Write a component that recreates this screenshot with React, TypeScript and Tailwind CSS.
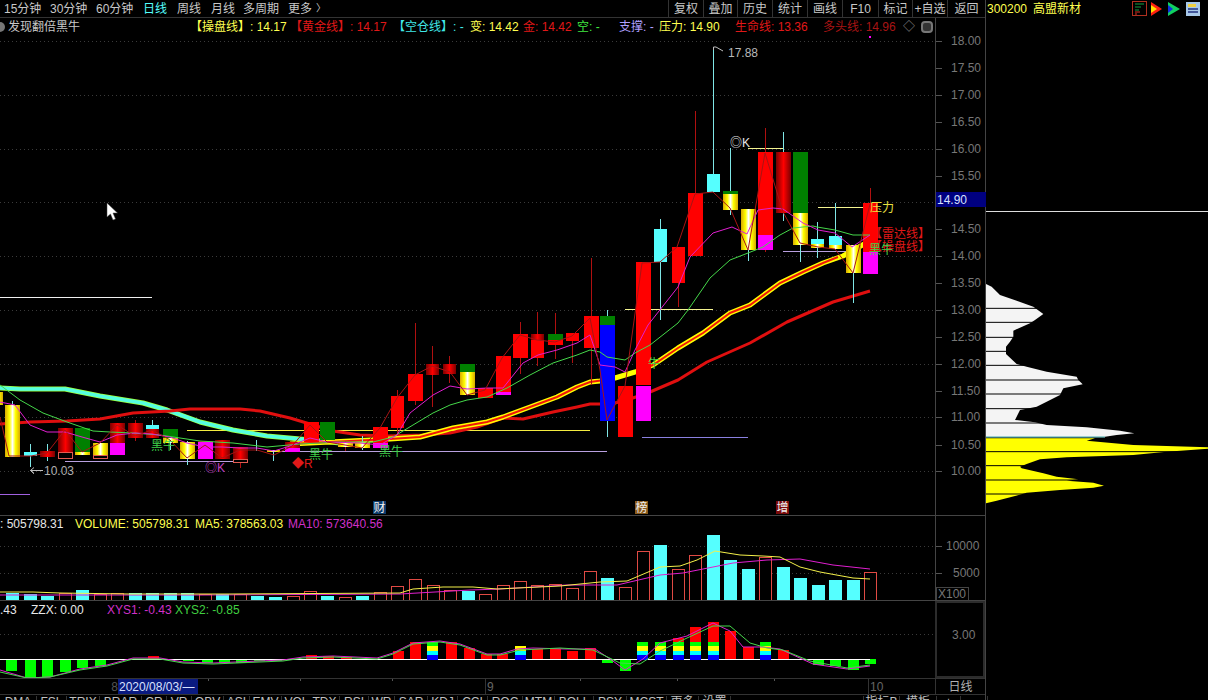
type Layer = [number, number, string];

interface Candle {
  x: number;
  w?: number;
  hi?: number;
  lo?: number;
  wick?: string;
  rects: Layer[];
}

const CYAN_WICK = '#7fe6e6';
const RED_WICK = '#b01010';

const fills: Record<string, string> = {
  r: '#ff0000',
  g: 'url(#redGrad)',
  y: 'url(#goldGrad)',
  c: '#55ffff',
  m: '#ff00ff',
  n: '#008000',
  b: '#0000ff',
};

const candles: Candle[] = [
  { x: -12, rects: [[392, 405, 'y']] },
  { x: 5, hi: 401, lo: 457, wick: CYAN_WICK, rects: [[405, 457, 'y']] },
  { x: 24, w: 13, hi: 444, lo: 467, wick: CYAN_WICK, rects: [[452, 456, 'c']] },
  { x: 40, hi: 444, lo: 461, wick: CYAN_WICK, rects: [[451, 457, 'g']] },
  { x: 58, rects: [[428, 452, 'g'], [452, 459, 'o']] },
  { x: 75, rects: [[428, 452, 'n'], [452, 455, 'y']] },
  { x: 93, rects: [[443, 455, 'y'], [455, 459, 'o']] },
  { x: 110, rects: [[423, 443, 'g'], [443, 455, 'm']] },
  { x: 128, hi: 420, lo: 441, wick: RED_WICK, rects: [[423, 438, 'g']] },
  { x: 146, w: 13, hi: 420, lo: 438, wick: CYAN_WICK, rects: [[425, 429, 'c'], [429, 438, 'g']] },
  { x: 163, hi: 429, lo: 450, wick: CYAN_WICK, rects: [[429, 438, 'n'], [438, 443, 'y']] },
  { x: 180, hi: 441, lo: 465, wick: CYAN_WICK, rects: [[442, 459, 'y']] },
  { x: 198, rects: [[441, 443, 'g'], [442, 459, 'm']] },
  { x: 215, rects: [[440, 459, 'g']] },
  { x: 233, lo: 468, hi: 447, wick: RED_WICK, rects: [[447, 459, 'g'], [459, 463, 'o']] },
  { x: 250, w: 13, hi: 440, lo: 451, wick: CYAN_WICK, rects: [] },
  { x: 267, w: 13, hi: 450, lo: 461, wick: CYAN_WICK, rects: [[450, 452, 'y']] },
  { x: 285, rects: [[442, 448, 'g'], [448, 452, 'm']] },
  { x: 304, rects: [[422, 442, 'r']] },
  { x: 320, rects: [[422, 440, 'n']] },
  { x: 338, hi: 441, lo: 451, wick: RED_WICK, rects: [[443, 447, 'y']] },
  { x: 355, hi: 436, lo: 450, wick: CYAN_WICK, rects: [[442, 448, 'y']] },
  { x: 373, rects: [[427, 443, 'r'], [443, 448, 'm']] },
  { x: 391, w: 13, hi: 390, lo: 435, wick: RED_WICK, rects: [[396, 428, 'r']] },
  { x: 408, hi: 323, lo: 405, wick: RED_WICK, rects: [[374, 401, 'r']] },
  { x: 426, w: 13, hi: 346, lo: 407, wick: RED_WICK, rects: [[364, 375, 'g']] },
  { x: 443, w: 13, hi: 356, lo: 383, wick: RED_WICK, rects: [[364, 374, 'g']] },
  { x: 460, rects: [[364, 372, 'n'], [372, 395, 'y']] },
  { x: 478, rects: [[388, 398, 'r']] },
  { x: 496, rects: [[356, 392, 'r'], [392, 395, 'm']] },
  { x: 513, hi: 322, lo: 374, wick: RED_WICK, rects: [[334, 358, 'r']] },
  { x: 531, w: 13, hi: 312, lo: 366, wick: RED_WICK, rects: [[334, 340, 'g'], [340, 358, 'r']] },
  { x: 548, hi: 313, lo: 359, wick: RED_WICK, rects: [[334, 340, 'n'], [340, 345, 'r']] },
  { x: 566, w: 13, lo: 363, hi: 333, wick: RED_WICK, rects: [[333, 341, 'r']] },
  { x: 584, hi: 258, lo: 385, wick: RED_WICK, rects: [[316, 348, 'r']] },
  { x: 600, hi: 310, lo: 437, wick: CYAN_WICK, rects: [[316, 325, 'n'], [325, 421, 'b']] },
  { x: 618, rects: [[386, 437, 'r']] },
  { x: 636, rects: [[262, 385, 'r'], [386, 421, 'm']] },
  { x: 654, w: 13, hi: 219, lo: 320, wick: CYAN_WICK, rects: [[229, 262, 'c']] },
  { x: 672, w: 13, lo: 307, wick: RED_WICK, hi: 247, rects: [[247, 283, 'r']] },
  { x: 688, hi: 111, lo: 256, wick: RED_WICK, rects: [[193, 256, 'r']] },
  { x: 707, w: 13, hi: 47, lo: 192, wick: CYAN_WICK, rects: [[174, 192, 'c']] },
  { x: 723, hi: 148, lo: 215, wick: CYAN_WICK, rects: [[191, 194, 'n'], [194, 210, 'y']] },
  { x: 741, lo: 261, hi: 209, wick: CYAN_WICK, rects: [[209, 250, 'y']] },
  { x: 758, hi: 128, lo: 252, wick: RED_WICK, rects: [[152, 235, 'r'], [235, 250, 'm']] },
  { x: 776, hi: 132, lo: 221, wick: CYAN_WICK, rects: [[152, 213, 'g']] },
  { x: 793, lo: 262, hi: 152, wick: CYAN_WICK, rects: [[152, 213, 'n'], [213, 245, 'y']] },
  { x: 811, w: 13, hi: 222, lo: 258, wick: CYAN_WICK, rects: [[239, 244, 'c'], [244, 248, 'y']] },
  { x: 829, w: 13, hi: 203, lo: 250, wick: CYAN_WICK, rects: [[236, 245, 'c'], [245, 249, 'y']] },
  { x: 846, hi: 245, lo: 303, wick: CYAN_WICK, rects: [[245, 273, 'y']] },
  { x: 863, hi: 188, lo: 262, wick: RED_WICK, rects: [[203, 252, 'r'], [252, 274, 'm']] },
];

const closeLine =
  '0,417 9,456 31,456 47,453 65,430 82,452 100,443 117,425 135,436 152,430 170,440 187,458 205,445 222,458 240,450 257,450 274,455 292,446 310,425 327,442 345,445 362,448 380,428 397,398 415,375 432,366 450,372 467,395 485,390 502,358 520,335 537,340 555,342 572,336 590,318 600,370 607,420 625,386 642,263 660,262 677,247 695,194 713,192 730,208 748,250 765,153 783,212 800,243 818,247 835,249 853,273 870,204';
const ma5Line =
  '0,402 15,405 30,425 47,432 65,432 82,437 100,442 117,435 135,433 152,434 170,437 187,443 205,447 222,447 240,448 257,448 274,451 290,446 310,438 327,442 360,443 380,445 397,435 410,413 433,395 450,386 467,389 487,388 503,388 523,363 538,355 557,350 577,343 590,335 600,365 615,367 625,372 635,350 648,325 678,287 690,257 713,233 732,227 747,234 758,210 773,208 783,209 803,223 818,230 835,233 852,247 870,235';
const ma10Line =
  '0,385 20,400 43,413 67,422 93,431 110,432 133,433 160,435 180,438 200,441 233,443 267,447 300,444 320,443 340,442 373,442 393,437 413,425 433,413 450,405 467,400 487,397 507,388 530,375 553,363 577,355 590,350 600,352 607,357 625,360 635,353 650,345 678,323 688,310 710,278 730,260 748,253 763,247 777,237 780,235 793,228 793,228 813,226 817,227 835,230 853,235 870,235';
const cyanLine =
  '0,388 20,389 65,389 100,396 143,403 167,410 200,422 233,430 267,436 300,439 320,441 340,443';
const redLine =
  '0,424 30,422 67,421 100,419 133,413 170,411 190,409 240,409 260,411 290,418 310,424 333,431 360,435 387,436 423,435 450,433 477,427 503,418 523,419 553,412 577,407 590,404 600,404 615,403 633,398 650,392 678,380 707,362 750,343 787,322 833,302 870,291';
const goldLine =
  '290,444 330,442 390,439 420,437 453,428 487,422 503,417 530,407 557,397 577,387 590,382 600,381 615,378 635,372 653,365 678,348 703,333 730,313 750,305 780,283 803,272 823,263 843,256 866,243';

const guides: [number, number, number, string][] = [
  [0, 152, 297, '#f0f0f0'],
  [187, 590, 430, '#f4ec40'],
  [65, 237, 461, '#b9a0e0'],
  [275, 607, 451, '#b9a0e0'],
  [0, 30, 494, '#a060e0'],
  [642, 748, 437, '#8a80e0'],
  [625, 713, 309, '#f4f490'],
  [748, 783, 148, '#f4f490'],
  [783, 860, 251, '#b9a0e0'],
  [818, 866, 207, '#f4f490'],
];

const volumes: [number, number, boolean][] = [
  [6, 593, false], [24, 594, false], [41, 596, false], [59, 593, true], [76, 590, false], [94, 594, true],
  [111, 593, true], [129, 593, false], [146, 593, false], [164, 593, false], [181, 593, false], [199, 594, true],
  [216, 594, false], [234, 594, true], [251, 596, false], [269, 597, false], [287, 596, true], [304, 591, true],
  [321, 596, false], [339, 597, true], [356, 596, false], [374, 592, true], [391, 586, true], [409, 579, true],
  [427, 585, true], [444, 590, true], [462, 591, false], [479, 594, true], [497, 585, true], [514, 581, true],
  [531, 585, true], [549, 584, true], [566, 588, true], [584, 571, true], [601, 578, false], [619, 587, true],
  [637, 551, true], [654, 545, false], [672, 569, true], [689, 555, true], [707, 535, false], [724, 560, false],
  [742, 569, false], [759, 557, true], [777, 567, false], [794, 578, false], [812, 585, false], [829, 580, false],
  [847, 580, false], [864, 572, true],
];

const volYellow =
  '0,592 33,592 60,593 130,594 230,594 400,593 413,589 443,587 473,587 497,589 560,586 600,582 627,581 660,567 680,566 697,560 715,551 740,555 763,556 780,557 800,567 820,572 853,578 870,579';
const volMagenta =
  '0,595 200,595 400,594 470,590 500,589 533,587 567,585 617,585 660,575 683,573 713,567 733,563 767,560 800,559 833,565 870,569';

const oscBars: [number, number, string][] = [
  [6, 670, 'lime'], [25, 677, 'lime'], [42, 676, 'lime'], [60, 671, 'lime'], [77, 667, 'lime'], [95, 665, 'lime'],
  [148, 655, 'red'], [183, 660, 'lime'], [202, 662, 'lime'], [219, 662, 'lime'], [236, 662, 'lime'], [254, 660, 'lime'],
  [271, 660, 'lime'], [306, 654, 'red'], [323, 655, 'red'], [341, 656, 'red'], [393, 650, 'red'], [410, 641, 'red'],
  [446, 641, 'red'], [464, 647, 'red'], [481, 653, 'red'], [497, 653, 'red'], [532, 648, 'red'], [550, 648, 'red'],
  [567, 650, 'red'], [585, 647, 'red'], [602, 662, 'lime'], [620, 670, 'lime'], [725, 630, 'red'], [743, 646, 'red'],
  [778, 649, 'red'], [813, 664, 'lime'], [830, 665, 'lime'], [848, 669, 'lime'], [865, 663, 'lime'],
];

// bars stacked blue, cyan, yellow, lime, and then a red cap
const rainbowBars: [number, number, number][] = [
  [427, 641, 641],
  [515, 645, 645],
  [637, 641, 641],
  [655, 641, 641],
  [673, 641, 637],
  [690, 641, 626],
  [708, 641, 621],
  [760, 641, 641],
];

const oscMagenta =
  '0,669 27,677 50,676 80,668 107,664 133,657 160,657 183,661 213,662 283,659 303,656 333,655 377,657 393,652 413,642 440,640 460,643 487,653 500,653 517,648 533,647 567,648 595,648 613,660 625,669 643,658 660,642 687,635 713,622 730,630 743,646 763,646 780,648 813,663 847,668 870,665';
const oscGreen =
  '0,671 27,677 50,676 80,669 107,665 133,658 160,658 183,662 213,663 283,660 303,657 333,656 377,658 393,653 413,643 440,641 460,644 487,654 500,654 520,649 560,647 593,649 620,662 640,663 660,650 687,637 713,625 730,625 750,642 767,647 783,649 810,660 847,667 870,664';

const axisPrices = [
  ['18.00', 41], ['17.50', 68], ['17.00', 95], ['16.50', 122], ['16.00', 149], ['15.50', 176],
  ['14.50', 229], ['14.00', 256], ['13.50', 283], ['13.00', 310], ['12.50', 337], ['12.00', 364],
  ['11.50', 391], ['11.00', 417], ['10.50', 445], ['10.00', 471],
] as [string, number][];

const profileWhite =
  '558,342 575,350 600,375 650,392 700,410 730,432 705,450 690,460 640,482 640,500 630,515 618,530 618,552 650,582 680,590 740,605 830,620 835,630 848,643 790,655 780,675 740,695 710,710 660,720 645,750 705,757 740,765 860,772 960,782 1003,790 950,795 915,800 558,800';
const profileYellow =
  '558,805 885,805 860,812 1000,825 1224,832 1224,836 1100,845 1000,855 800,862 720,868 680,882 660,890 665,895 730,910 770,920 835,928 800,932 880,938 912,947 880,953 780,960 680,968 645,978 590,992 558,1000';
const profileGaps = [415, 457, 502, 544, 586, 630, 672, 716, 759, 845, 887, 930, 972];

const toolLeft = [
  ['15分钟', 'w-[50px] pl-[4px]'],
  ['30分钟', 'w-[46px]'],
  ['60分钟', 'w-[47px]'],
];
const toolRight: [string, string][] = [
  ['复权', 'w-[35px]'],
  ['叠加', 'w-[34px]'],
  ['历史', 'w-[35px]'],
  ['统计', 'w-[35px]'],
  ['画线', 'w-[35px]'],
  ['F10', 'w-[36px]'],
  ['标记', 'w-[34px]'],
  ['+自选', 'w-[35px]'],
  ['返回', 'w-[38px]'],
];

const tabs: [string, string][] = [
  ['DMA', 'w-[37px]'], ['FSL', 'w-[30px]'], ['TRIX', 'w-[33px]'], ['BRAR', 'w-[42px]'], ['CR', 'w-[25px]'],
  ['VR', 'w-[25px]'], ['OBV', 'w-[32px]'], ['ASI', 'w-[26px]'], ['EMV', 'w-[32px]'], ['VOL-TDX', 'w-[58px]'],
  ['RSI', 'w-[29px]'], ['WR', 'w-[26px]'], ['SAR', 'w-[33px]'], ['KDJ', 'w-[30px]'], ['CCI', 'w-[30px]'],
  ['ROC', 'w-[35px]'], ['MTM', 'w-[32px]'], ['BOLL', 'w-[39px]'], ['PSY', 'w-[33px]'], ['MCST', 'w-[40px]'],
  ['更多', 'w-[32px]'], ['设置', 'w-[32px] text-[#7fe6e6]'], ['', 'w-[133px]'], ['指标B', 'w-[36px]'],
  ['模板', 'w-[37px]'], ['+', 'w-[24px]'], ['', 'w-[27px]'],
];

function Poly({ points, color, width = 1 }: { points: string; color: string; width?: number }) {
  return <polyline points={points} fill="none" stroke={color} strokeWidth={width} strokeLinejoin="round" />;
}

function Dotted({ y }: { y: number }) {
  return <line x1={0} x2={935} y1={y + 0.5} y2={y + 0.5} stroke="#3a3a3a" strokeDasharray="1 3" />;
}

function Tick() {
  return <span className="w-px h-[2px] self-start bg-[#555]" />;
}

function CandleMark({ c }: { c: Candle }) {
  const w = c.w ?? 15;
  const cx = c.x + w / 2;
  return (
    <g>
      {c.hi !== undefined && c.lo !== undefined && (
        <line x1={cx} x2={cx} y1={c.hi} y2={c.lo} stroke={c.wick} strokeWidth={1} />
      )}
      {c.rects.map(([top, bottom, kind], i) =>
        kind === 'o' ? (
          <rect key={i} x={c.x + 0.5} y={top + 0.5} width={w - 1} height={bottom - top - 1} fill="#000" stroke="#e05a50" />
        ) : (
          <rect key={i} x={c.x} y={top} width={w} height={bottom - top} fill={fills[kind]} />
        ),
      )}
    </g>
  );
}

function Cow({ x, y }: { x: number; y: number }) {
  return (
    <text x={x} y={y} fontSize={12} fill="#3fd24a">
      黑牛
    </text>
  );
}

function Badge({ x, label, color }: { x: number; label: string; color: string }) {
  return (
    <g>
      <rect x={x} y={501} width={13} height={13} fill={color} />
      <text x={x + 0.5} y={512} fontSize={12} fill="#f0f0f0">
        {label}
      </text>
    </g>
  );
}

function PriceChart() {
  return (
    <svg viewBox="0 35 935 480" className="block w-[935px] h-[480px]">
      <defs>
        <linearGradient id="goldGrad">
          <stop offset="0" stopColor="#d8a800" />
          <stop offset="0.3" stopColor="#ffff00" />
          <stop offset="0.5" stopColor="#ffffff" />
          <stop offset="0.7" stopColor="#ffff00" />
          <stop offset="1" stopColor="#d8a800" />
        </linearGradient>
        <linearGradient id="redGrad">
          <stop offset="0" stopColor="#7a0000" />
          <stop offset="0.5" stopColor="#ff0000" />
          <stop offset="1" stopColor="#7a0000" />
        </linearGradient>
      </defs>

      {[41, 95, 149, 202, 256, 310, 364, 417, 471].map((y) => (
        <Dotted key={y} y={y} />
      ))}
      <rect x={869} y={36} width={2} height={2} fill="#ff00ff" />

      {guides.map(([x1, x2, y, color]) => (
        <line key={`${x1}-${y}`} x1={x1} x2={x2} y1={y + 0.5} y2={y + 0.5} stroke={color} />
      ))}

      <Poly points={cyanLine} color="#9dff3a" width={5} />
      <Poly points={cyanLine} color="#55ffe0" width={3.5} />
      <Poly points={redLine} color="#e00f0f" width={3} />
      <Poly points={goldLine} color="#ffff00" width={5} />
      <polyline points="290,444 330,442 390,439 420,437 453,428 487,422 503,417 530,407 557,397 577,387 590,382 612,379" fill="none" stroke="#f01808" strokeWidth={2} />
      <polyline points="640,370 653,365 678,348 703,333 730,313 750,305 780,283 803,272 823,263 838,257" fill="none" stroke="#f01808" strokeWidth={2} />

      {candles.map((c) => (
        <CandleMark key={c.x} c={c} />
      ))}

      <Poly points={ma10Line} color="#45d84a" />
      <Poly points={ma5Line} color="#e01fd0" />
      <Poly points={closeLine} color="#a81414" />

      <polyline points="34,467.5 30.5,470.5 34,473.5 30.5,470.5 43,470.5" fill="none" stroke="#c0c0c0" />
      <text x={44} y={475} fontSize={12} fill="#b0b0b0">10.03</text>
      <text x={205} y={472} fontSize={12} fill="#c040c0">◎K</text>
      <Cow x={151} y={450} />
      <Cow x={309} y={459} />
      <Cow x={379} y={456} />
      <text x={292} y={468} fontSize={12} fill="#e01818">◆R</text>

      <polyline points="713.5,50 713.5,47 716,47 723,51" fill="none" stroke="#c0c0c0" />
      <text x={728} y={57} fontSize={12} fill="#b8b8b8">17.88</text>
      <text x={730} y={147} fontSize={12} fill="#e8e8e8">◎K</text>
      <text x={648} y={368} fontSize={12} fill="#3fd24a">牛</text>
      <text x={870} y={212} fontSize={12} fill="#e8e040">压力</text>
      <text x={870} y={238} fontSize={12} fill="#e01818">【雷达线】</text>
      <text x={870} y={251} fontSize={12} fill="#e01818">【操盘线】</text>
      <Cow x={869} y={254} />

      <Badge x={373} label="财" color="#0b3a6b" />
      <Badge x={635} label="榜" color="#8a5a1a" />
      <Badge x={776} label="增" color="#7a0a0a" />

      <path d="M107 203 L107 217 L110.5 214 L113 220 L115.5 219 L113 213 L117.5 213 Z" fill="#fff" stroke="#444" strokeWidth={0.5} />
    </svg>
  );
}

function PriceAxis() {
  return (
    <svg viewBox="936 18 50 497" className="block w-[50px] h-[497px]">
      {axisPrices.map(([label, y]) => (
        <g key={label}>
          <line x1={936} x2={942} y1={y + 0.5} y2={y + 0.5} stroke="#555" />
          <text x={951} y={y + 4} fontSize={12} fill="#777">
            {label}
          </text>
        </g>
      ))}
      <rect x={936} y={192} width={50} height={15} fill="#000080" />
      <text x={937} y={204} fontSize={12} fill="#d8e0ff">14.90</text>
    </svg>
  );
}

function VolumeChart() {
  return (
    <svg viewBox="0 532 935 68" className="block w-[935px] h-[68px]">
      <Dotted y={546} />
      <Dotted y={573} />
      {volumes.map(([x, top, up]) =>
        up ? (
          <rect key={x} x={x + 0.5} y={top + 0.5} width={12} height={600 - top} fill="#000" stroke="#e04a44" />
        ) : (
          <rect key={x} x={x} y={top} width={13} height={601 - top} fill="#55ffff" />
        ),
      )}
      <Poly points={volMagenta} color="#e01fd0" />
      <Poly points={volYellow} color="#f4f04a" />
    </svg>
  );
}

function VolumeAxis() {
  return (
    <svg viewBox="936 516 50 85" className="block w-[50px] h-[85px]">
      {[['10000', 546, 946], ['5000', 573, 953]].map(([label, y, x]) => (
        <g key={label}>
          <line x1={936} x2={942} y1={Number(y) + 0.5} y2={Number(y) + 0.5} stroke="#555" />
          <text x={x} y={Number(y) + 4} fontSize={12} fill="#777">
            {label}
          </text>
        </g>
      ))}
      <rect x={936.5} y={587.5} width={32} height={13} fill="none" stroke="#444" />
      <text x={938} y={598} fontSize={12} fill="#777">X100</text>
    </svg>
  );
}

function OscChart() {
  return (
    <svg viewBox="0 617 935 60" className="block w-[935px] h-[60px]">
      <Dotted y={633} />
      {oscBars.map(([x, edge, kind]) => (
        <rect
          key={x}
          x={x}
          y={Math.min(edge, 658)}
          width={11}
          height={Math.abs(edge - 658)}
          fill={kind === 'lime' ? '#00ff00' : '#ff0000'}
        />
      ))}
      <line x1={0} x2={870} y1={658.5} y2={658.5} stroke="#fff" />
      {rainbowBars.map(([x, green, red]) => (
        <g key={x}>
          {red < green && <rect x={x} y={red} width={11} height={green - red} fill="#ff0000" />}
          <rect x={x} y={green} width={11} height={645 - green} fill={green === 645 ? '#ffff90' : '#00ff00'} />
          <rect x={x} y={645} width={11} height={5} fill="#ffff00" />
          <rect x={x} y={650} width={11} height={4} fill="#00ffff" />
          <rect x={x} y={654} width={11} height={5} fill="#0000ff" />
        </g>
      ))}
      <Poly points={oscMagenta} color="#e01fd0" />
      <Poly points={oscGreen} color="#45d84a" />
    </svg>
  );
}

function ProfileChart() {
  return (
    <svg viewBox="558 126 666 882" className="block w-[222px] h-[294px]">
      <polygon points={profileWhite} fill="#f4f4f4" />
      <polygon points={profileYellow} fill="#ffff00" />
      <line x1={558} x2={915} y1={801} y2={801} stroke="#7fe6e6" strokeWidth={3} />
      {profileGaps.map((y) => (
        <line key={y} x1={558} x2={1224} y1={y} y2={y} stroke="#000" strokeWidth={3} />
      ))}
    </svg>
  );
}

function ToolIcons() {
  return (
    <svg viewBox="0 0 83 18" className="block w-[83px] h-[18px]">
      <rect x={6.5} y={1.5} width={14} height={14} fill="#000" stroke="#b03020" />
      <path d="M9 4h9M9 7h6M9 10h4" stroke="#10a040" strokeWidth={1} />
      <path d="M9 12h5M9 14h2" stroke="#e03020" strokeWidth={1} />
      <path d="M25 2 L25 16 L36 9 Z" fill="#ff2010" />
      <path d="M25 5 L25 13 L31 9 Z" fill="#ffe000" />
      <path d="M42 2 L42 16 L54 9 Z" fill="#10d060" />
      <path d="M42 5 L42 13 L47 9 Z" fill="#1030e0" />
      <rect x={60} y={2} width={14} height={14} fill="#a8c8e8" />
      <rect x={62} y={4} width={8} height={3} fill="#f0d040" />
      <path d="M62 9h10M62 12h10" stroke="#203080" strokeWidth={1.5} />
    </svg>
  );
}

function Legend({ label, value, className }: { label: string; value: string; className: string }) {
  return (
    <span className={`shrink-0 whitespace-nowrap ${className}`}>
      {label}
      {value}
    </span>
  );
}

export default function App() {
  return (
    <div className="flex w-[1208px] h-[700px] overflow-hidden bg-black text-[12px] leading-none text-[#c8c8c8] [font-family:'Liberation_Sans','Noto_Sans_CJK_SC',sans-serif]">
      <div className="flex flex-col w-[986px] shrink-0 border-r border-[#444]">
        {/* top toolbar */}
        <div className="flex items-center h-[18px] shrink-0 border-b border-[#333]">
          {toolLeft.map(([label, cls]) => (
            <span key={label} className={cls}>{label}</span>
          ))}
          <span className="w-[34px] text-[#55ffff]">日线</span>
          <span className="w-[34px]">周线</span>
          <span className="w-[32px]">月线</span>
          <span className="w-[45px]">多周期</span>
          <span className="w-[28px]">更多</span>
          <span className="text-[10px]">〉</span>
          <div className="flex ml-auto h-full">
            {toolRight.map(([label, cls]) => (
              <span key={label} className={`flex items-center justify-center border-l border-[#333] ${cls}`}>
                {label}
              </span>
            ))}
          </div>
        </div>

        {/* price pane */}
        <div className="flex h-[498px] shrink-0 border-b border-[#444]">
          <div className="flex flex-col w-[935px] shrink-0">
            <div className="relative flex items-center h-[17px] shrink-0">
              <span className="w-[5px] h-[10px] rounded-r-full bg-[#777]" />
              <span className="ml-[3px] w-[182px]">发现翻倍黑牛</span>
              <Legend className="text-[#ffff50] w-[100px]" label="【操盘线】" value=": 14.17" />
              <Legend className="text-[#e01818] w-[103px]" label="【黄金线】" value=": 14.17" />
              <Legend className="text-[#40e8e8] w-[77px]" label="【空仓线】" value=": -" />
              <Legend className="text-[#ffff50] w-[53px]" label="变" value=": 14.42" />
              <Legend className="text-[#e01818] w-[54px]" label="金" value=": 14.42" />
              <Legend className="text-[#40e840] w-[42px]" label="空" value=": -" />
              <Legend className="text-[#b0a0ff] w-[40px]" label="支撑" value=": -" />
              <Legend className="text-[#ffff50] w-[76px]" label="压力" value=": 14.90" />
              <Legend className="text-[#e01818] w-[88px]" label="生命线" value=": 13.36" />
              <Legend className="text-[#a81414] w-[80px]" label="多头线" value=": 14.96" />
              <span className="w-[18px] text-[#888]">◇</span>
              <span className="w-[12px] h-[12px] rounded-sm border-2 border-[#777] bg-[#333]" />
            </div>
            <PriceChart />
          </div>
          <div className="border-l border-[#444]">
            <PriceAxis />
          </div>
        </div>

        {/* volume pane */}
        <div className="flex h-[85px] shrink-0 border-b border-[#444]">
          <div className="flex flex-col w-[935px] shrink-0">
            <div className="flex items-center h-[16px] shrink-0 whitespace-nowrap">
              <span className="w-[75px] text-[#e8e8e8]">: 505798.31</span>
              <span className="w-[120px] text-[#ffff50]">VOLUME: 505798.31</span>
              <span className="w-[93px] text-[#ffff50]">MA5: 378563.03</span>
              <span className="text-[#d030c8]">MA10: 573640.56</span>
            </div>
            <VolumeChart />
          </div>
          <div className="border-l border-[#444]">
            <VolumeAxis />
          </div>
        </div>

        {/* oscillator pane */}
        <div className="flex h-[77px] shrink-0">
          <div className="flex flex-col w-[935px] shrink-0">
            <div className="flex items-center h-[17px] shrink-0 whitespace-nowrap">
              <span className="w-[31px] text-[#e8e8e8]">.43</span>
              <span className="w-[76px] text-[#e8e8e8]">ZZX: 0.00</span>
              <span className="w-[68px] text-[#d030c8]">XYS1: -0.43</span>
              <span className="text-[#40d040]">XYS2: -0.85</span>
            </div>
            <OscChart />
          </div>
          <div className="flex-1 border-2 border-[#2c2c2c] text-[#777]">
            <div className="mt-[26px] pl-[15px]">3.00</div>
          </div>
        </div>

        {/* date row */}
        <div className="flex items-center h-[17px] shrink-0 border-y border-[#333]">
          <span className="w-[118px] text-right text-[#555]">8</span>
          <span className="flex items-center h-full w-[80px] pl-px bg-[#0a1a80] text-[#d8e0ff]">2020/08/03/—</span>
          <span className="w-[10px]" />
          <Tick />
          <span className="w-[91px]" />
          <Tick />
          <span className="w-[91px]" />
          <Tick />
          <span className="w-[92px]" />
          <span className="flex items-center h-full w-[95px] border-l border-[#333] pl-px text-[#666]">9</span>
          <Tick />
          <span className="w-[96px]" />
          <Tick />
          <span className="w-[96px]" />
          <Tick />
          <span className="w-[93px]" />
          <span className="flex items-center h-full w-[67px] border-l border-[#333] pl-px text-[#666]">10</span>
          <span className="flex items-center justify-center h-full flex-1 border-l border-[#333] text-[#b0b0b0]">日线</span>
        </div>

        {/* bottom tabs, cut off by the window */}
        <div className="flex h-[18px] shrink-0 pt-px">
          {tabs.map(([label, cls], i) => (
            <span key={i} className={`shrink-0 text-center border-r border-[#333] text-[#c0c0c0] ${cls}`}>
              {label}
            </span>
          ))}
        </div>
      </div>

      <div className="flex flex-col flex-1 min-w-0">
        <div className="flex items-center h-[18px] shrink-0">
          <span className="ml-px w-[46px] text-[#ffff50]">300200</span>
          <span className="text-[#ffff50]">高盟新材</span>
          <span className="ml-auto -mr-px"><ToolIcons /></span>
        </div>
        <div className="h-[194px] shrink-0 border-b border-[#ddd]" />
        <ProfileChart />
      </div>
    </div>
  );
}
